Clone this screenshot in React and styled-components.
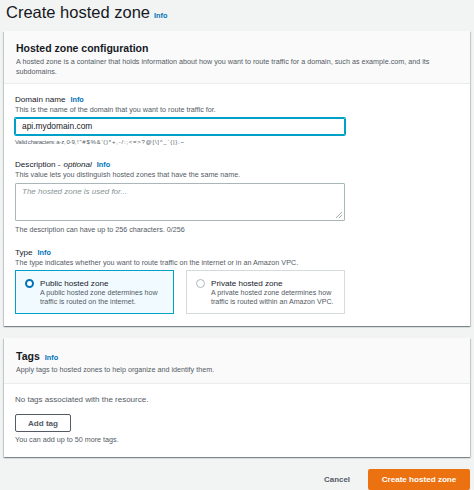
import React from 'react';
import styled, { createGlobalStyle } from 'styled-components';

const GlobalStyle = createGlobalStyle`
  html, body {
    margin: 0;
    padding: 0;
    background: #f2f3f3;
  }
  body {
    font-family: 'Liberation Sans', Arial, sans-serif;
    color: #16191f;
  }
  * { box-sizing: border-box; }
`;

const Page = styled.div`
  width: 474px;
  height: 490px;
  overflow: hidden;
  padding: 0 4px;
  display: flex;
  flex-direction: column;
`;

const TitleRow = styled.div`
  display: flex;
  align-items: baseline;
  gap: 4px;
  height: 32px;
  padding: 2px 0 0 2px;
  & h1 {
    margin: 0;
    font-size: 16.5px;
    font-weight: 400;
    line-height: 20px;
  }
`;

const Info = styled.span`
  color: #0073bb;
  font-weight: 700;
  font-size: 7.3px;
  margin-left: ${({ $gap }) => ($gap === undefined ? 5 : $gap)}px;
`;

const Card = styled.section`
  background: #fff;
  box-shadow: 0 1px 1px 0 rgba(0, 28, 36, 0.3), 1px 1px 1px 0 rgba(0, 28, 36, 0.15),
    -1px 1px 1px 0 rgba(0, 28, 36, 0.15);
  margin-bottom: ${({ $mb }) => $mb || 0}px;
`;

const CardHeader = styled.div`
  background: #fafafa;
  border-bottom: 1px solid #eaeded;
  padding: ${({ $pad }) => $pad};
  height: ${({ $h }) => $h}px;
  & h2 {
    margin: 0;
    font-size: 10.5px;
    font-weight: 700;
    line-height: 14px;
    display: flex;
    align-items: baseline;
  }
  & p {
    margin: ${({ $gap }) => $gap}px 0 0;
    font-size: 7.2px;
    line-height: 9.5px;
    color: #545b64;
  }
`;

const CardBody = styled.div`
  padding: ${({ $pad }) => $pad};
`;

const Field = styled.div`
  margin-bottom: ${({ $mb }) => $mb || 0}px;
`;

const Label = styled.div`
  font-size: 8.1px;
  line-height: 11px;
  color: #16191f;
  display: flex;
  align-items: baseline;
  & em {
    font-style: italic;
    margin-left: 3px;
  }
`;

const Hint = styled.div`
  font-size: ${({ $small }) => ($small ? '6px' : '7.2px')};
  word-spacing: ${({ $small }) => ($small ? '-0.5px' : '0')};
  letter-spacing: ${({ $small }) => ($small ? '-0.2px' : '0')};
  line-height: 9px;
  color: #545b64;
  margin-top: ${({ $mt }) => $mt || 0}px;
`;

const TextInput = styled.div`
  margin-top: 4px;
  width: 330px;
  height: 17px;
  border: 1px solid #00a1c9;
  box-shadow: 0 0 0 1px #00a1c9;
  border-radius: 1px;
  padding: 0 6px;
  font-size: 8.4px;
  line-height: 15px;
  color: #16191f;
`;

const TextArea = styled.div`
  position: relative;
  margin-top: 4px;
  width: 330px;
  height: 38px;
  border: 1px solid #aab7b8;
  border-radius: 1px;
  padding: 3px 6px;
  font-size: 8px;
  font-style: italic;
  color: #879596;
  & svg {
    position: absolute;
    right: 2px;
    bottom: 2px;
  }
`;

const Tiles = styled.div`
  margin-top: 3px;
  display: flex;
  gap: 12px;
  width: 330px;
`;

const Tile = styled.div`
  flex: 1;
  height: 44px;
  border: 1px solid ${({ $on }) => ($on ? '#00a1c9' : '#d5dbdb')};
  background: ${({ $on }) => ($on ? '#f1faff' : '#fff')};
  padding: 7px 6px 0 9px;
  display: flex;
  gap: 6px;
`;

const Radio = styled.span`
  flex-shrink: 0;
  width: 9px;
  height: 9px;
  margin-top: 1px;
  border-radius: 50%;
  border: ${({ $on }) => ($on ? '2.5px solid #0073bb' : '1px solid #aab7b8')};
  background: #fff;
`;

const TileText = styled.div`
  & b {
    display: block;
    font-weight: 400;
    font-size: 8.1px;
    line-height: 11px;
    color: #16191f;
  }
  & span {
    display: block;
    font-size: 7.1px;
    line-height: 9px;
    color: #545b64;
  }
`;

const Plain = styled.div`
  font-size: 8px;
  line-height: 11px;
  color: #545b64;
`;

const SecondaryButton = styled.button`
  display: block;
  margin-top: 9px;
  width: 56px;
  height: 18px;
  border: 1px solid #545b64;
  border-radius: 2px;
  background: #fff;
  font-family: inherit;
  font-weight: 700;
  font-size: 8.1px;
  color: #545b64;
  padding: 0;
`;

const Footer = styled.div`
  margin-top: 12px;
  display: flex;
  justify-content: flex-end;
  align-items: center;
  gap: 18px;
`;

const LinkButton = styled.span`
  font-weight: 700;
  font-size: 7.9px;
  color: #545b64;
`;

const PrimaryButton = styled.button`
  width: 102px;
  height: 21px;
  border: none;
  border-radius: 2px;
  background: #ec7211;
  color: #fff;
  font-family: inherit;
  font-weight: 700;
  font-size: 8.1px;
  padding: 0;
`;

const ResizeGrip = () => (
  <svg width="6" height="6" viewBox="0 0 6 6">
    <path d="M6 0L0 6M6 3L3 6" stroke="#879596" strokeWidth="0.8" />
  </svg>
);

export default function App() {
  return (
    <Page>
      <GlobalStyle />
      <TitleRow>
        <h1>Create hosted zone</h1>
        <Info $gap={0}>Info</Info>
      </TitleRow>

      <Card $mb={12}>
        <CardHeader $h={53} $pad="10px 12px 0" $gap={2}>
          <h2>Hosted zone configuration</h2>
          <p>
            A hosted zone is a container that holds information about how you want to route traffic for a
            domain, such as example.com, and its subdomains.
          </p>
        </CardHeader>
        <CardBody $pad="10px 11px 12px">
          <Field $mb={12}>
            <Label>
              Domain name <Info>Info</Info>
            </Label>
            <Hint>This is the name of the domain that you want to route traffic for.</Hint>
            <TextInput>api.mydomain.com</TextInput>
            <Hint $small $mt={3}>
              {"Valid characters: a-z, 0-9, ! \" # $ % & ' ( ) * + , - / : ; < = > ? @ [ \\ ] ^ _ ` { | } . ~"}
            </Hint>
          </Field>
          <Field $mb={13}>
            <Label>
              Description -<em>optional</em> <Info>Info</Info>
            </Label>
            <Hint>This value lets you distinguish hosted zones that have the same name.</Hint>
            <TextArea>
              The hosted zone is used for...
              <ResizeGrip />
            </TextArea>
            <Hint $mt={4}>The description can have up to 256 characters. 0/256</Hint>
          </Field>
          <Field>
            <Label>
              Type <Info>Info</Info>
            </Label>
            <Hint>The type indicates whether you want to route traffic on the internet or in an Amazon VPC.</Hint>
            <Tiles>
              <Tile $on>
                <Radio $on />
                <TileText>
                  <b>Public hosted zone</b>
                  <span>A public hosted zone determines how traffic is routed on the internet.</span>
                </TileText>
              </Tile>
              <Tile>
                <Radio />
                <TileText>
                  <b>Private hosted zone</b>
                  <span>A private hosted zone determines how traffic is routed within an Amazon VPC.</span>
                </TileText>
              </Tile>
            </Tiles>
          </Field>
        </CardBody>
      </Card>

      <Card>
        <CardHeader $h={46} $pad="11px 12px 0" $gap={0}>
          <h2>
            Tags <Info>Info</Info>
          </h2>
          <p>Apply tags to hosted zones to help organize and identify them.</p>
        </CardHeader>
        <CardBody $pad="10px 11px 13px">
          <Plain>No tags associated with the resource.</Plain>
          <SecondaryButton>Add tag</SecondaryButton>
          <Hint $mt={3}>You can add up to 50 more tags.</Hint>
        </CardBody>
      </Card>

      <Footer>
        <LinkButton>Cancel</LinkButton>
        <PrimaryButton>Create hosted zone</PrimaryButton>
      </Footer>
    </Page>
  );
}
